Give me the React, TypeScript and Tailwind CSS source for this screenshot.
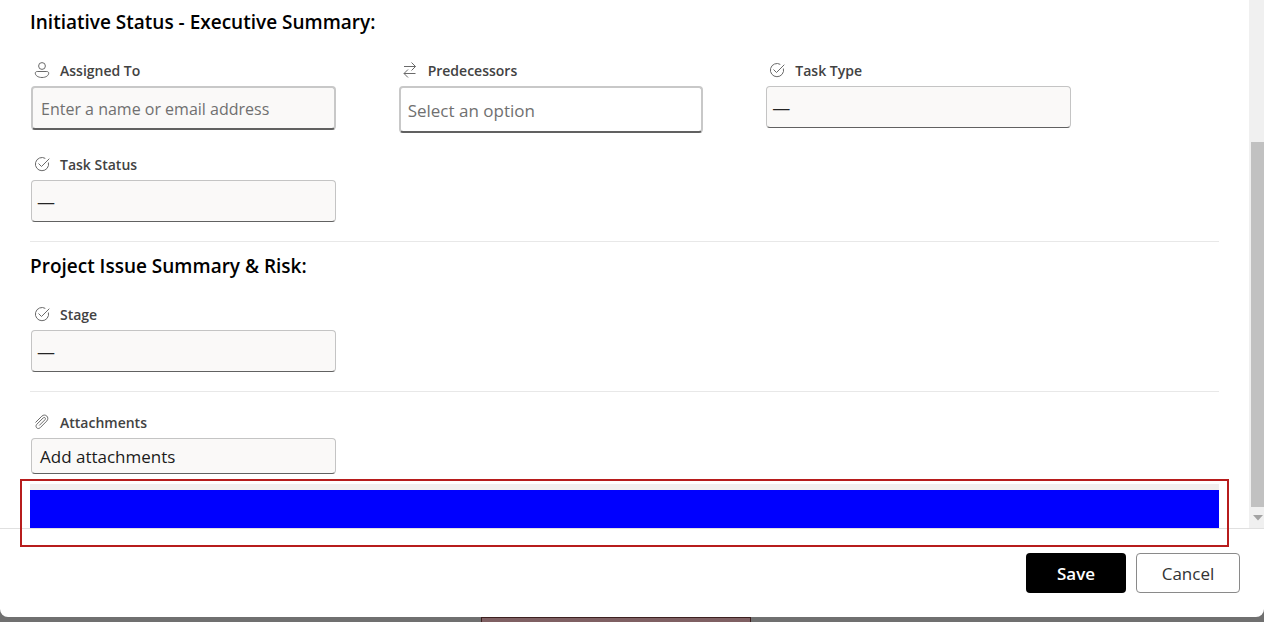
import type { ReactNode } from 'react';

const iconClass = 'h-4 w-4 shrink-0 text-[#6a6a6a]';

function PersonIcon() {
  return (
    <svg viewBox="0 0 16 16" className={iconClass} fill="none" stroke="currentColor" aria-hidden="true">
      <circle cx="8" cy="4" r="3.4" />
      <path d="M3.2 9.5h9.6c1.2 0 1.9.7 1.9 1.7 0 2.300-2.700 4.300-6.700 4.300s-6.700-2-6.700-4.300c0-1 .7-1.700 1.900-1.700z" />
    </svg>
  );
}

function SwapIcon() {
  return (
    <svg viewBox="0 0 16 16" className={iconClass} fill="none" stroke="currentColor" aria-hidden="true">
      <path d="M2 4.500H13.500M9.500 .5l4 4-4 4M13.500 11.500H2M6 7.500l-4 4 4 4" />
    </svg>
  );
}

function CheckCircleIcon() {
  return (
    <svg viewBox="0 0 16 16" className={iconClass} fill="none" stroke="currentColor" aria-hidden="true">
      <path d="M11.300 2.400A6.600 6.600 0 1 0 14.400 6.500" />
      <path d="M4.500 7.500l3 3 7.800-7.800" />
    </svg>
  );
}

function ClipIcon() {
  return (
    <svg viewBox="0 0 16 16" className={iconClass} fill="none" stroke="currentColor" aria-hidden="true">
      <path d="M1.500 8.500L7.800 2.200c3.500-3.300 8.200 1.300 4.900 4.900l-6.500 6.600c-2.500 2.300-5.700-.8-3.400-3.400l6.500-6.500c1.300-1.100 2.900.5 1.800 1.800L5.200 11.500" />
    </svg>
  );
}

type FieldProps = { id: string; label: string; icon: ReactNode; children: ReactNode };

function Field({ id, label, icon, children }: FieldProps) {
  return (
    <div className="flex flex-col gap-1.5">
      <label htmlFor={id} className="flex h-5 items-center gap-2.5 pl-[3px] text-[14px] font-semibold text-[#424242]">
        {icon}
        <span className="pt-0.5 leading-5">{label}</span>
      </label>
      {children}
    </div>
  );
}

function ChoiceField({ id, label }: { id: string; label: string }) {
  return (
    <Field id={id} label={label} icon={<CheckCircleIcon />}>
      <button
        id={id}
        type="button"
        className="h-[42px] w-full rounded border border-[#c4c4c4] border-b-[#616161] bg-[#faf9f8] px-[5px] pt-0.5 text-left text-[18px] text-[#242424]"
      >
        —
      </button>
    </Field>
  );
}

const gridClass = 'grid grid-cols-3 items-start gap-x-[63px] gap-y-[21px] pl-px pr-[148px]';
const headingClass = 'mb-6 text-[19px] font-semibold leading-7 text-black';

export default function App() {
  return (
    <div className="min-h-screen bg-[#707070] font-['Open_Sans','Noto_Sans',sans-serif]">
      <div className="rounded-b-lg bg-white">
        <div className="flex">
          <main className="min-w-0 flex-1 px-[30px]">
            <section className="border-b border-[#e8e8e8] pb-[19px] pt-2">
              <h2 className={headingClass}>Initiative Status - Executive Summary:</h2>
              <div className={gridClass}>
                <Field id="assigned" label="Assigned To" icon={<PersonIcon />}>
                  <input
                    id="assigned"
                    placeholder="Enter a name or email address"
                    className="h-11 w-full rounded border-2 border-[#c8c8c8] border-b-[#616161] bg-[#faf9f8] px-2 pt-0.5 text-[16px] placeholder:text-[#707070]"
                  />
                </Field>
                <Field id="predecessors" label="Predecessors" icon={<SwapIcon />}>
                  <input
                    id="predecessors"
                    placeholder="Select an option"
                    className="h-[47px] w-full rounded border-2 border-[#c8c8c8] border-b-[#616161] bg-white px-[7px] pt-0.5 text-[17px] placeholder:text-[#707070]"
                  />
                </Field>
                <ChoiceField id="task-type" label="Task Type" />
                <ChoiceField id="task-status" label="Task Status" />
              </div>
            </section>

            <section className="border-b border-[#e8e8e8] pb-[19px] pt-2.5">
              <h2 className={headingClass}>Project Issue Summary &amp; Risk:</h2>
              <div className={gridClass}>
                <ChoiceField id="stage" label="Stage" />
              </div>
            </section>

            <section className="pb-2.5 pt-5">
              <div className={gridClass}>
                <Field id="attachments" label="Attachments" icon={<ClipIcon />}>
                  <button
                    id="attachments"
                    type="button"
                    className="h-9 w-full rounded border border-[#c4c4c4] border-b-[#616161] bg-[#faf9f8] px-2 pt-0.5 text-left text-[17px] text-[#1b1b1b]"
                  >
                    Add attachments
                  </button>
                </Field>
              </div>
            </section>

            <div className="relative h-11 border-t-[6px] border-[#f0eeee] bg-[#0000ff]">
              <div className="pointer-events-none absolute -inset-x-2.5 -bottom-[19px] -top-[11px] border-2 border-[#b71c1c]" />
            </div>
          </main>

          <div className="flex w-[15px] flex-col bg-[#f0f0f0] pl-0.5 pt-[142px]" aria-hidden="true">
            <div className="flex-1 bg-[#c1c1c1]" />
            <div className="flex h-[21px] items-center justify-center">
              <svg viewBox="0 0 10 6" className="h-[6px] w-[10px] fill-[#a3a3a3]">
                <path d="M0 0h10L5 5.500z" />
              </svg>
            </div>
          </div>
        </div>

        <footer className="flex justify-end gap-2.5 border-t border-[#e0e0e0] p-6">
          <button type="button" className="h-10 w-[100px] rounded bg-black pt-0.5 text-[17px] font-semibold text-white">
            Save
          </button>
          <button type="button" className="h-10 w-[104px] rounded border border-[#8a8a8a] bg-white pt-0.5 text-[17px] font-medium text-[#333333]">
            Cancel
          </button>
        </footer>
      </div>
      <div className="mx-auto h-[5px] w-[270px] translate-x-[-16px] border-x border-t border-[#3d2020] bg-[#7f6063]" />
    </div>
  );
}
